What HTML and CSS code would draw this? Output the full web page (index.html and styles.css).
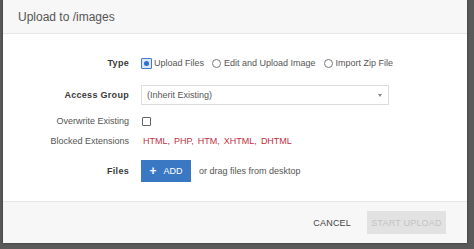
FILE: index.html
```html
<!DOCTYPE html>
<html>
<head>
<meta charset="utf-8">
<link rel="stylesheet" href="styles.css">
</head>
<body>
<div class="modal">
  <div class="modal-header">Upload to /images</div>
  <div class="modal-body">
    <div class="row row-type">
      <div class="label bold">Type</div>
      <div class="control radios">
        <label class="radio"><span class="radio-focus"><span class="dot"></span></span>Upload Files</label>
        <label class="radio"><span class="radio-circle"></span>Edit and Upload Image</label>
        <label class="radio"><span class="radio-circle"></span>Import Zip File</label>
      </div>
    </div>
    <div class="row row-access">
      <div class="label bold">Access Group</div>
      <div class="control">
        <div class="select"><span>(Inherit Existing)</span><span class="caret"></span></div>
      </div>
    </div>
    <div class="row row-overwrite">
      <div class="label">Overwrite Existing</div>
      <div class="control"><span class="checkbox"></span></div>
    </div>
    <div class="row row-blocked">
      <div class="label">Blocked Extensions</div>
      <div class="control exts">
        <span>HTML,</span><span>PHP,</span><span>HTM,</span><span>XHTML,</span><span>DHTML</span>
      </div>
    </div>
    <div class="row row-files">
      <div class="label bold">Files</div>
      <div class="control files">
        <button class="btn-add"><span class="plus">+</span>ADD</button>
        <span class="drag">or drag files from desktop</span>
      </div>
    </div>
  </div>
  <div class="modal-footer">
    <span class="cancel">CANCEL</span>
    <button class="btn-start">START UPLOAD</button>
  </div>
</div>
</body>
</html>
```

FILE: styles.css
```css
html, body {
  margin: 0;
  padding: 0;
}
body {
  background: #5a5a5a;
  width: 474px;
  height: 249px;
  overflow: hidden;
  font-family: "Liberation Sans", Arial, sans-serif;
  font-size: 9px;
  color: #555;
}
.modal {
  margin-left: 3px;
  width: 464px;
  height: 243px;
  background: #fff;
  display: flex;
  flex-direction: column;
  box-shadow: 0 0 2px rgba(0,0,0,0.5);
}
.modal-header {
  height: 34px;
  box-sizing: border-box;
  background: #f7f7f7;
  border-bottom: 1px solid #e6e6e6;
  padding-left: 15px;
  display: flex;
  align-items: center;
  font-size: 12px;
  color: #555;
}
.modal-body {
  flex: 1;
  padding-top: 21px;
  box-sizing: border-box;
}
.row {
  display: flex;
  align-items: center;
}
.label {
  width: 126px;
  text-align: right;
  flex-shrink: 0;
  color: #555;
}
.label.bold {
  font-weight: bold;
  color: #3a3a3a;
  letter-spacing: 0.3px;
}
.control {
  margin-left: 12px;
  display: flex;
  align-items: center;
}
.row-type { height: 16px; }
.row-access { height: 20px; margin-top: 14px; }
.row-overwrite { height: 14px; margin-top: 9px; }
.row-blocked { height: 14px; margin-top: 6px; }
.row-files { height: 22px; margin-top: 12px; }

.radio {
  display: flex;
  align-items: center;
  color: #555;
  margin-right: 8px;
}
.radio-focus {
  width: 9px;
  height: 9px;
  border: 1px solid #3b7bd4;
  background: #dbe8f8;
  border-radius: 1px;
  display: flex;
  align-items: center;
  justify-content: center;
  margin-right: 2px;
}
.dot {
  width: 5px;
  height: 5px;
  border-radius: 50%;
  background: #2f6fd0;
}
.radio-circle {
  width: 7px;
  height: 7px;
  border: 1px solid #777;
  border-radius: 50%;
  margin-right: 3px;
}
.select {
  width: 248px;
  height: 20px;
  box-sizing: border-box;
  border: 1px solid #dcdcdc;
  display: flex;
  align-items: center;
  justify-content: space-between;
  padding: 0 6px 0 5px;
  color: #555;
}
.caret {
  width: 0;
  height: 0;
  border-left: 2px solid transparent;
  border-right: 2px solid transparent;
  border-top: 3px solid #888;
}
.checkbox {
  width: 7px;
  height: 7px;
  border: 1px solid #666;
  border-radius: 1px;
  margin-left: 1px;
}
.exts {
  color: #c3303f;
  gap: 4px;
  margin-left: 14px;
}
.btn-add {
  width: 50px;
  height: 22px;
  border: none;
  background: #3b78c3;
  color: #fff;
  font-family: "Liberation Sans", Arial, sans-serif;
  font-size: 9px;
  display: flex;
  align-items: center;
  justify-content: center;
  padding: 0;
}
.plus {
  font-size: 12px;
  font-weight: bold;
  margin-right: 7px;
  line-height: 1;
}
.drag {
  margin-left: 8px;
  color: #555;
}
.modal-footer {
  height: 42px;
  box-sizing: border-box;
  background: #f7f7f7;
  border-top: 1px solid #e6e6e6;
  display: flex;
  align-items: center;
  justify-content: flex-end;
  padding-right: 21px;
}
.cancel {
  color: #444;
  margin-right: 16px;
  letter-spacing: 0.2px;
}
.btn-start {
  width: 79px;
  height: 23px;
  border: none;
  background: #e2e2e2;
  color: #c4c4c4;
  font-family: "Liberation Sans", Arial, sans-serif;
  font-size: 9px;
  letter-spacing: 0.2px;
  padding: 0;
}
```
